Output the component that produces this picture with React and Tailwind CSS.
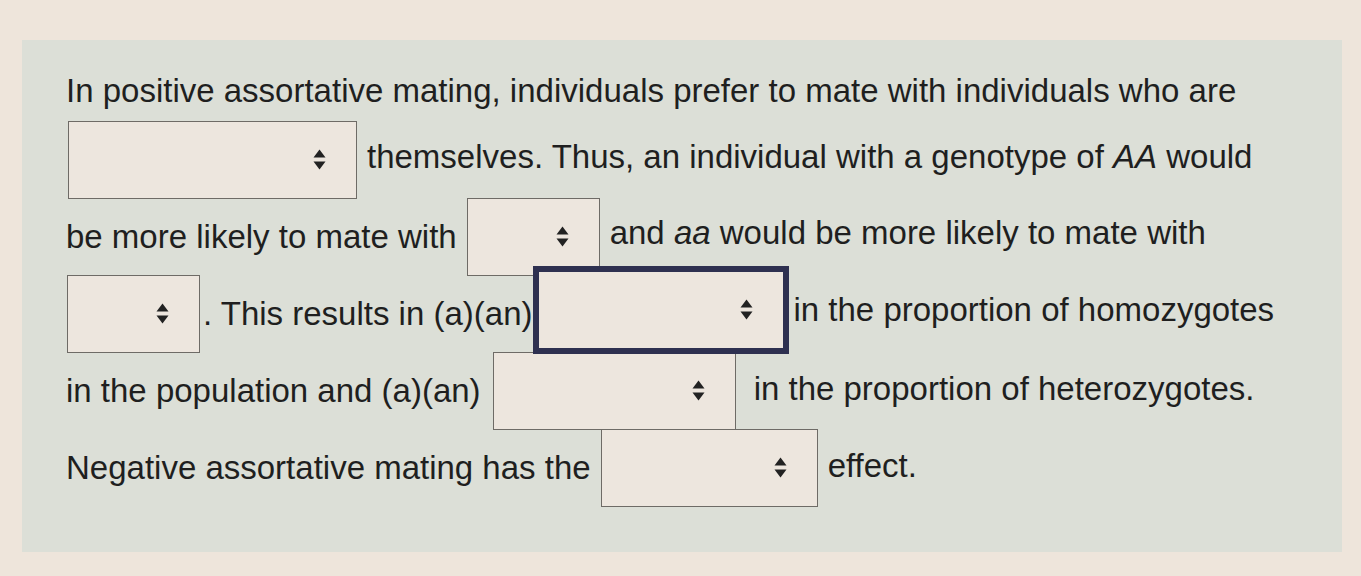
import React from 'react';

function Arrows() {
  return (
    <svg width="13" height="21" viewBox="0 0 13 21" className="shrink-0">
      <path d="M6.5 0.5 L12.5 8.5 L0.5 8.5 Z" fill="#222222" />
      <path d="M0.5 12.5 L12.5 12.5 L6.5 20.5 Z" fill="#222222" />
    </svg>
  );
}

function Select({ className = '', focused = false }) {
  return (
    <span
      className={`flex h-[78px] shrink-0 items-center justify-end bg-[#ede6de] pr-[30px] ${
        focused ? 'border-[6px] border-[#2e3050]' : 'border-[1.5px] border-[#6e6b66]'
      } ${className}`}
    >
      <Arrows />
    </span>
  );
}

export default function App() {
  return (
    <div
      className="h-[576px] w-[1361px] overflow-hidden bg-[#eee5db] pt-[40px] pl-[22px] text-[33px] text-[#1f1f1f]"
      style={{ fontFamily: '"Liberation Sans", Arial, sans-serif' }}
    >
      <div className="h-[512px] w-[1320px] bg-[#dcdfd7] pl-[44px] pt-[20px]">
        {/* line 1 */}
        <div className="flex h-[61px] items-center">
          <span>In positive assortative mating, individuals prefer to mate with individuals who are</span>
        </div>

        {/* line 2 */}
        <div className="flex h-[77px] items-center">
          <Select className="ml-[2px] w-[289px]" />
          <span className="ml-[10px] -translate-y-[3px]">
            themselves. Thus, an individual with a genotype of <i>AA</i> would
          </span>
        </div>

        {/* line 3 */}
        <div className="flex h-[77px] items-center">
          <span>be more likely to mate with</span>
          <Select className="ml-[10px] w-[133px]" />
          <span className="ml-[10px] -translate-y-[4px]">
            and <i>aa</i> would be more likely to mate with
          </span>
        </div>

        {/* line 4 */}
        <div className="flex h-[77px] items-center">
          <Select className="ml-[1px] w-[133px]" />
          <span className="ml-[3px]">. This results in (a)(an)</span>
          <Select focused className="ml-[1px] h-[88px] w-[256px] -translate-y-[4px] pr-[28px]" />
          <span className="ml-[4px] -translate-y-[4px]">in the proportion of homozygotes</span>
        </div>

        {/* line 5 */}
        <div className="flex h-[77px] items-center">
          <span>in the population and (a)(an)</span>
          <Select className="ml-[12px] w-[243px]" />
          <span className="ml-[18px] -translate-y-[2px]">in the proportion of heterozygotes.</span>
        </div>

        {/* line 6 */}
        <div className="flex h-[77px] items-center">
          <span>Negative assortative mating has the</span>
          <Select className="ml-[10px] w-[217px]" />
          <span className="ml-[10px] -translate-y-[2px]">effect.</span>
        </div>
      </div>
    </div>
  );
}
